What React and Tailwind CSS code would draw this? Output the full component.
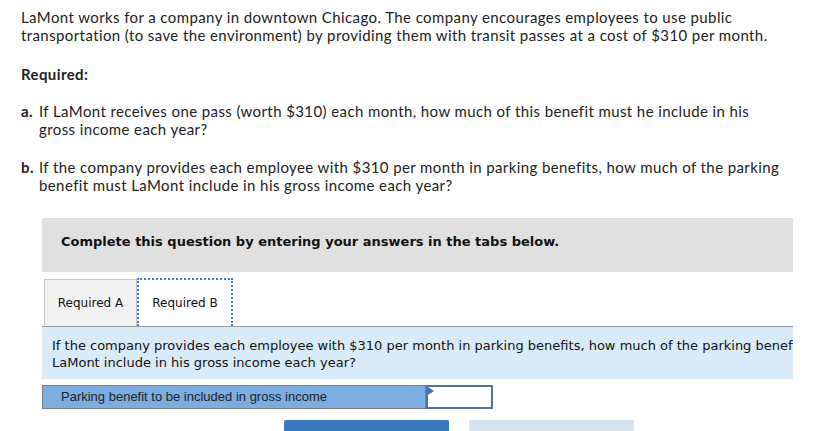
export default function App() {
  const body = { fontFamily: '"Lato", "Open Sans", sans-serif' };
  const verdana = { fontFamily: '"DejaVu Sans", Verdana, sans-serif' };

  return (
    <div className="w-[836px] h-[431px] overflow-hidden bg-white text-[#222]">
      <div className="pl-[21px] pt-[8px] w-[793px] tracking-[0.4px]" style={body}>
        <p className="text-[15px] leading-[18px]">
          LaMont works for a company in downtown Chicago. The company encourages employees to use public
          <br />
          transportation (to save the environment) by providing them with transit passes at a cost of $310 per month.
        </p>
        <p className="mt-[21px] text-[15px] leading-[18px] font-bold">Required:</p>

        <div className="mt-[19px] flex text-[15px] leading-[18px]">
          <span className="w-[18px] shrink-0 font-bold">a.</span>
          <p>
            If LaMont receives one pass (worth $310) each month, how much of this benefit must he include in his
            <br />
            gross income each year?
          </p>
        </div>
        <div className="mt-[20px] flex text-[15px] leading-[18px]">
          <span className="w-[18px] shrink-0 font-bold">b.</span>
          <p>
            If the company provides each employee with $310 per month in parking benefits, how much of the parking
            <br />
            benefit must LaMont include in his gross income each year?
          </p>
        </div>
      </div>

      <div className="ml-[42px] w-[751px]" style={verdana}>
        {/* instructions box */}
        <div className="mt-[24px] h-[54px] bg-[#e0e0e0] flex items-center pl-[19px] pb-[6px]">
          <span className="text-[13px] font-bold text-[#111]">
            Complete this question by entering your answers in the tabs below.
          </span>
        </div>

        {/* tabs */}
        <div className="mt-[6px] flex items-end border-b border-[#999] pl-[2px]">
          <button className="h-[47px] w-[93px] bg-[#f2f2f2] border border-b-0 border-[#c6c6c6] text-[12px] text-[#111]">
            Required A
          </button>
          <button className="h-[48px] w-[96px] bg-white border-2 border-dotted border-[#3d78c4] border-b-0 text-[12px] text-[#111]">
            Required B
          </button>
        </div>

        {/* question panel */}
        <div className="h-[52px] bg-[#d9ebf8] overflow-hidden pl-[10px] pt-[10px]">
          <p className="whitespace-nowrap text-[13px] leading-[17px] text-[#111]">
            If the company provides each employee with $310 per month in parking benefits, how much of the parking benefit must
            <br />
            LaMont include in his gross income each year?
          </p>
        </div>

        {/* answer row */}
        <div className="mt-[6px] flex h-[24px]">
          <div
            className="w-[384px] bg-[#7badE3] border border-[#7f7f7f] flex items-center pl-[18px] text-[13px] text-[#222]"
            style={{ fontFamily: '"Liberation Sans", Arial, sans-serif' }}
          >
            Parking benefit to be included in gross income
          </div>
          <div className="relative w-[67px] bg-white border-2 border-[#4d74a3]">
            <div className="absolute left-0 top-0 w-0 h-0 border-t-[4px] border-b-[4px] border-l-[6px] border-t-transparent border-b-transparent border-l-[#3d78c4]" />
          </div>
        </div>

        {/* nav buttons */}
        <div className="mt-[11px] flex pl-[242px] gap-[20px]">
          <div className="w-[165px] h-[20px] bg-[#3a78c0] rounded-t-[2px]" />
          <div className="w-[165px] h-[20px] bg-[#d6e2f0] rounded-t-[2px]" />
        </div>
      </div>
    </div>
  );
}
